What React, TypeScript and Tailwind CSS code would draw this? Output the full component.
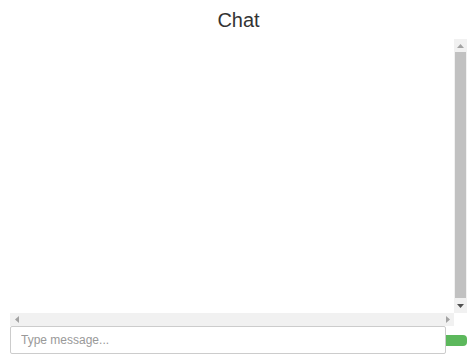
export default function App() {
  return (
    <div className="w-[474px] h-[364px] bg-white font-['Liberation_Sans',Arial,sans-serif] text-[#333]">
      {/* Header */}
      <div className="h-[39px] pl-[10px] pr-[7px] flex items-center justify-center">
        <h1 className="text-[20px] leading-none pt-[1px]">Chat</h1>
      </div>

      {/* Message list with scrollbars */}
      <div className="ml-[10px] w-[457px] h-[287px] flex flex-col">
        <div className="flex-1 flex">
          <div className="flex-1" />
          <div className="w-[13px] flex flex-col bg-[#f1f1f1]">
            <div className="h-[13px] flex items-center justify-center">
              <svg width="7" height="4" viewBox="0 0 7 4"><path d="M3.5 0 L7 4 L0 4 Z" fill="#a3a3a3" /></svg>
            </div>
            <div className="flex-1 mx-[1px] bg-[#c1c1c1]" />
            <div className="h-[15px] flex items-center justify-center">
              <svg width="7" height="4" viewBox="0 0 7 4"><path d="M0 0 L7 0 L3.5 4 Z" fill="#505050" /></svg>
            </div>
          </div>
        </div>
        <div className="h-[13px] flex">
          <div className="flex-1 flex items-center justify-between bg-[#f1f1f1]">
            <div className="w-[13px] flex justify-center">
              <svg width="4" height="7" viewBox="0 0 4 7"><path d="M4 0 L4 7 L0 3.5 Z" fill="#a3a3a3" /></svg>
            </div>
            <div className="w-[13px] flex justify-center">
              <svg width="4" height="7" viewBox="0 0 4 7"><path d="M0 0 L4 3.5 L0 7 Z" fill="#a3a3a3" /></svg>
            </div>
          </div>
          <div className="w-[13px] bg-white" />
        </div>
      </div>

      {/* Composer */}
      <div className="ml-[10px] flex items-center">
        <input
          type="text"
          placeholder="Type message..."
          className="w-[436px] h-[28px] border border-[#ccc] rounded-[2px] pl-[10px] text-[12px] outline-none placeholder:text-[#999]"
        />
        <button className="w-[21px] h-[11px] rounded-r-[4px] bg-[#5cb85c]" />
      </div>
    </div>
  );
}
